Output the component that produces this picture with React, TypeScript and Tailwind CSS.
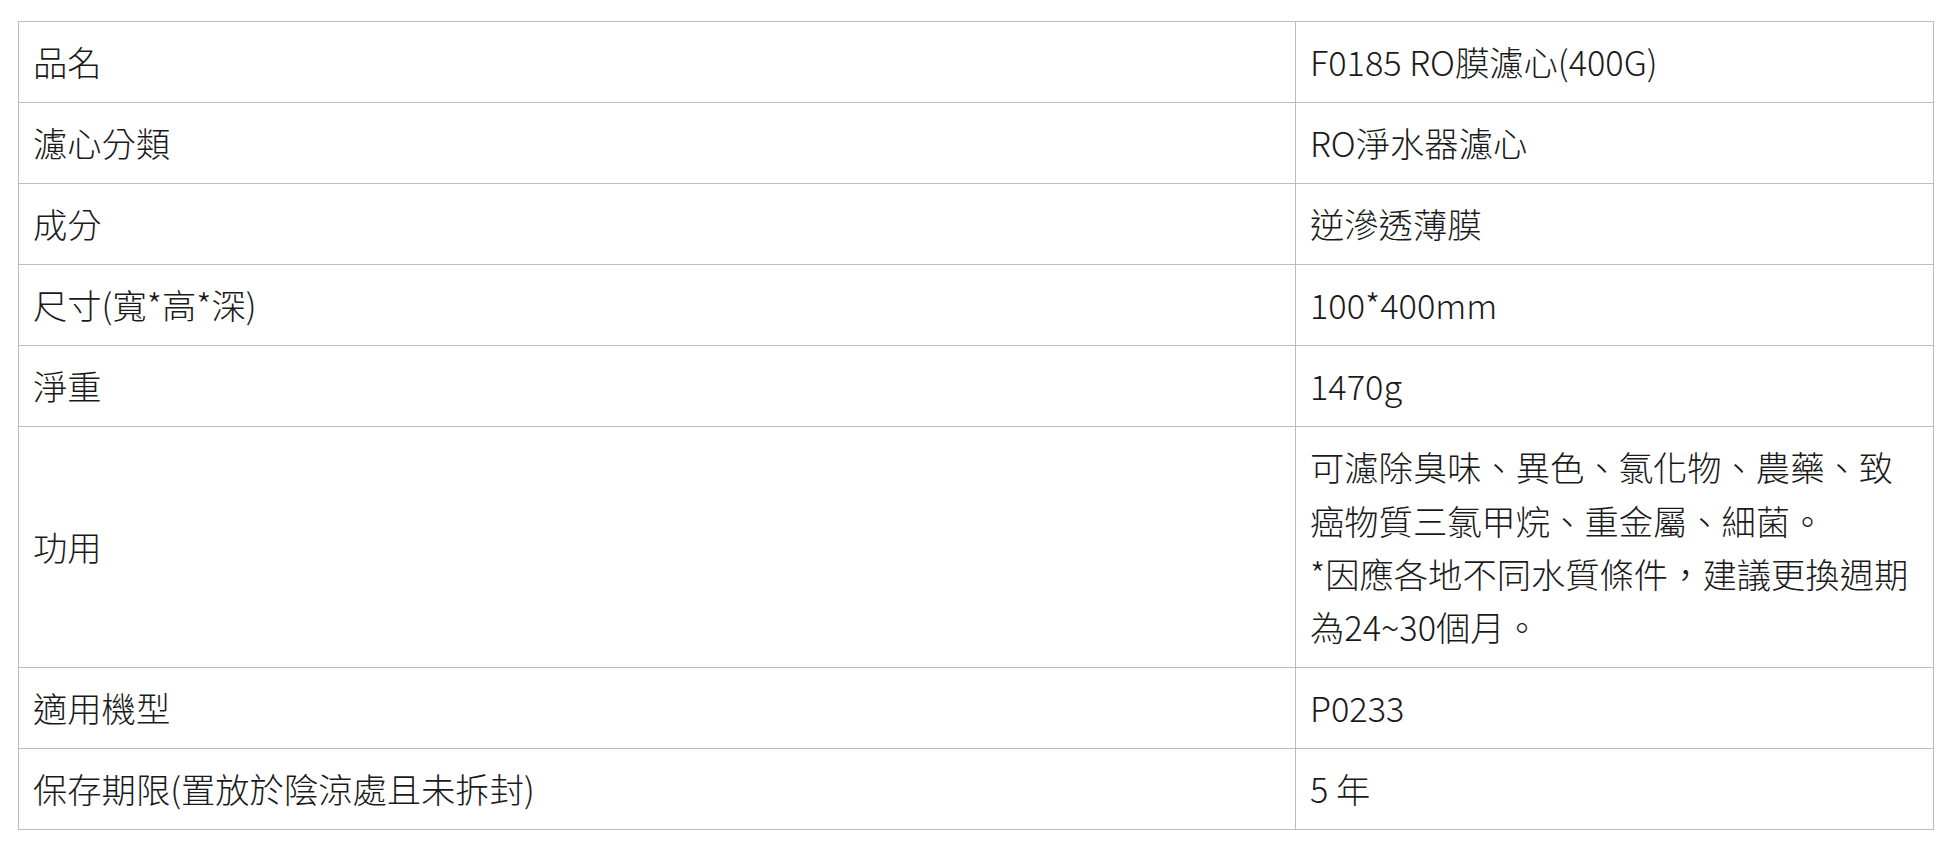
const specs: { label: string; value: string[] }[] = [
  { label: "品名", value: ["F0185 RO膜濾心(400G)"] },
  { label: "濾心分類", value: ["RO淨水器濾心"] },
  { label: "成分", value: ["逆滲透薄膜"] },
  { label: "尺寸(寬*高*深)", value: ["100*400mm"] },
  { label: "淨重", value: ["1470g"] },
  {
    label: "功用",
    value: [
      "可濾除臭味、異色、氯化物、農藥、致癌物質三氯甲烷、重金屬、細菌。",
      "*因應各地不同水質條件，建議更換週期為24~30個月。",
    ],
  },
  { label: "適用機型", value: ["P0233"] },
  { label: "保存期限(置放於陰涼處且未拆封)", value: ["5 年"] },
];

export default function App() {
  return (
    <div
      className="bg-white min-h-screen pt-[21px] pl-[18px] pr-[20px] text-[#1a1a1a]"
      style={{ fontFamily: '"Noto Sans CJK TC", "Noto Sans", sans-serif' }}
    >
      <table className="w-[1916px] table-fixed border-collapse border border-[#bdbdbd] text-[34.3px] font-light leading-[53.33px]">
        <colgroup>
          <col className="w-[1277px]" />
          <col />
        </colgroup>
        <tbody>
          {specs.map((row) => (
            <tr key={row.label}>
              <td className="border border-[#bdbdbd] px-[14px] py-[13.33px] align-middle">
                {row.label}
              </td>
              <td className="border border-[#bdbdbd] px-[14px] py-[13.33px] align-middle">
                {row.value.map((line, i) => (
                  <div key={i}>{line}</div>
                ))}
              </td>
            </tr>
          ))}
        </tbody>
      </table>
    </div>
  );
}
